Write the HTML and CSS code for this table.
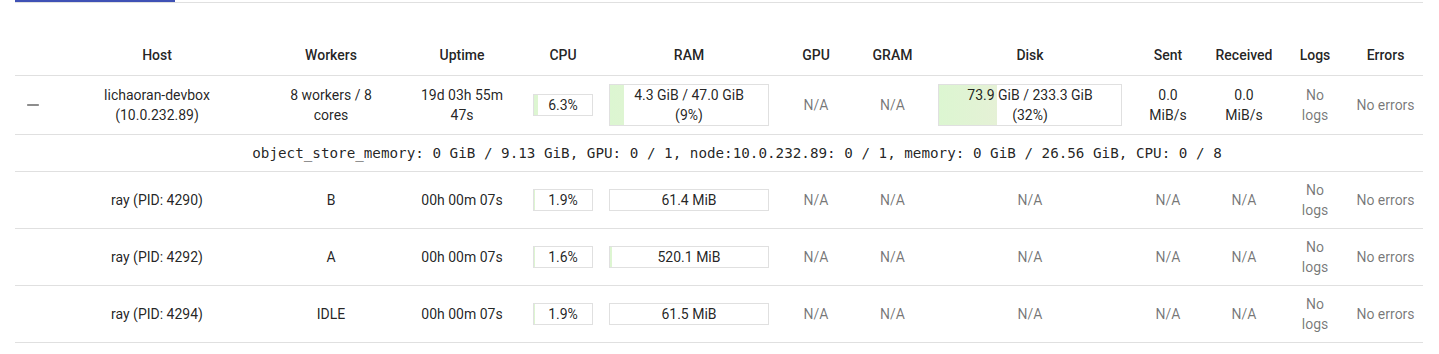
FILE: index.html
```html
<!DOCTYPE html>
<html lang="en">
<head>
<meta charset="utf-8">
<title>Ray Dashboard - Machine view</title>
<link rel="stylesheet" href="styles.css">
</head>
<body>
<div class="page">
  <div class="tabs"><div class="tab-indicator"></div></div>
  <table class="nodes">
    <colgroup>
      <col class="w-expand"><col class="w-host"><col class="w-workers"><col class="w-uptime">
      <col class="w-cpu"><col class="w-ram"><col class="w-gpu"><col class="w-gram">
      <col class="w-disk"><col class="w-sent"><col class="w-recv"><col class="w-logs"><col class="w-errors">
    </colgroup>
    <thead>
      <tr>
        <th></th><th>Host</th><th>Workers</th><th>Uptime</th><th>CPU</th><th>RAM</th><th>GPU</th><th>GRAM</th><th>Disk</th><th>Sent</th><th>Received</th><th>Logs</th><th>Errors</th>
      </tr>
    </thead>
    <tbody>
      <tr>
        <td class="expand"><svg class="icon" viewBox="0 0 24 24" width="20" height="20"><path d="M19 13H5v-2h14v2z"/></svg></td>
        <td>lichaoran-devbox<br>(10.0.232.89)</td>
        <td><div class="wrap w100">8 workers / 8 cores</div></td>
        <td><div class="wrap w90">19d 03h 55m 47s</div></td>
        <td><div class="bar" style="--p:6.3%"><span class="bar-text">6.3%</span></div></td>
        <td><div class="bar bar-wide" style="--p:9%"><span class="bar-text">4.3 GiB / 47.0 GiB (9%)</span></div></td>
        <td class="muted">N/A</td>
        <td class="muted">N/A</td>
        <td><div class="bar bar-wide bar-warm" style="--p:32%"><span class="bar-text">73.9 GiB / 233.3 GiB (32%)</span></div></td>
        <td><div class="wrap w45">0.0 MiB/s</div></td>
        <td><div class="wrap w45">0.0 MiB/s</div></td>
        <td class="muted"><div class="wrap w40">No logs</div></td>
        <td class="muted nowrap">No errors</td>
      </tr>
      <tr>
        <td></td>
        <td colspan="12" class="mono">object_store_memory: 0 GiB / 9.13 GiB, GPU: 0 / 1, node:10.0.232.89: 0 / 1, memory: 0 GiB / 26.56 GiB, CPU: 0 / 8</td>
      </tr>
      <tr>
        <td></td>
        <td>ray (PID: 4290)</td>
        <td>B</td>
        <td>00h 00m 07s</td>
        <td><div class="bar" style="--p:1.9%"><span class="bar-text">1.9%</span></div></td>
        <td><div class="bar" style="--p:0.13%"><span class="bar-text">61.4 MiB</span></div></td>
        <td class="muted">N/A</td>
        <td class="muted">N/A</td>
        <td class="muted">N/A</td>
        <td class="muted">N/A</td>
        <td class="muted">N/A</td>
        <td class="muted"><div class="wrap w40">No logs</div></td>
        <td class="muted nowrap">No errors</td>
      </tr>
      <tr>
        <td></td>
        <td>ray (PID: 4292)</td>
        <td>A</td>
        <td>00h 00m 07s</td>
        <td><div class="bar" style="--p:1.6%"><span class="bar-text">1.6%</span></div></td>
        <td><div class="bar" style="--p:1.08%"><span class="bar-text">520.1 MiB</span></div></td>
        <td class="muted">N/A</td>
        <td class="muted">N/A</td>
        <td class="muted">N/A</td>
        <td class="muted">N/A</td>
        <td class="muted">N/A</td>
        <td class="muted"><div class="wrap w40">No logs</div></td>
        <td class="muted nowrap">No errors</td>
      </tr>
      <tr>
        <td></td>
        <td>ray (PID: 4294)</td>
        <td>IDLE</td>
        <td>00h 00m 07s</td>
        <td><div class="bar" style="--p:1.9%"><span class="bar-text">1.9%</span></div></td>
        <td><div class="bar" style="--p:0.13%"><span class="bar-text">61.5 MiB</span></div></td>
        <td class="muted">N/A</td>
        <td class="muted">N/A</td>
        <td class="muted">N/A</td>
        <td class="muted">N/A</td>
        <td class="muted">N/A</td>
        <td class="muted"><div class="wrap w40">No logs</div></td>
        <td class="muted nowrap">No errors</td>
      </tr>
    </tbody>
  </table>
</div>
</body>
</html>
```

FILE: styles.css
```css
* { box-sizing: border-box; }

html, body {
  margin: 0;
  padding: 0;
  background: #ffffff;
}

body {
  font-family: Roboto, "Liberation Sans", Arial, sans-serif;
  font-size: 14px;
  line-height: 20px;
  color: rgba(0, 0, 0, 0.87);
}

.page {
  margin: 0 16px 0 15px;
}

.tabs {
  height: 3px;
  border-bottom: 1px solid #e0e0e0;
}

.tab-indicator {
  width: 160px;
  height: 2px;
  background: #3f51b5;
}

.nodes {
  margin-top: 32px;
  width: 100%;
  border-collapse: collapse;
  table-layout: fixed;
}

.w-expand { width: 36px; }
.w-host { width: 212px; }
.w-workers { width: 136px; }
.w-uptime { width: 126px; }
.w-cpu { width: 76px; }
.w-ram { width: 176px; }
.w-gpu { width: 78px; }
.w-gram { width: 75px; }
.w-disk { width: 200px; }
.w-sent { width: 76px; }
.w-recv { width: 76px; }
.w-logs { width: 66px; }
.w-errors { width: 75px; }

.nodes th {
  font-weight: 500;
  line-height: 24px;
  padding: 8px;
  text-align: center;
  border-bottom: 1px solid #e0e0e0;
  color: rgba(0, 0, 0, 0.87);
}

.nodes td {
  padding: 8px;
  text-align: center;
  vertical-align: middle;
  border-bottom: 1px solid #e0e0e0;
}

.expand {
  line-height: 0;
}

.icon {
  fill: rgba(0, 0, 0, 0.54);
  display: inline-block;
}

.wrap { margin: 0 auto; }
.w100 { max-width: 100px; }
.w90 { max-width: 90px; }
.w45 { max-width: 45px; }
.w40 { max-width: 40px; }

.nowrap { white-space: nowrap; }

.muted { color: rgba(0, 0, 0, 0.54); }

.mono {
  font-family: "DejaVu Sans Mono", "Liberation Mono", monospace;
  font-size: 14.25px;
  white-space: nowrap;
}

.bar {
  display: flex;
  justify-content: center;
  border: 1px solid #e0e0e0;
  background: linear-gradient(to right, #dcf6d1 0%, #def5d2 var(--p), transparent var(--p));
}

.bar-warm {
  background: linear-gradient(to right, #dcf6d1 0%, #e5f1d6 var(--p), transparent var(--p));
}

.bar-text {
  padding: 0 8px;
  text-align: center;
}

.bar-wide .bar-text {
  padding: 0 14px;
}
```
